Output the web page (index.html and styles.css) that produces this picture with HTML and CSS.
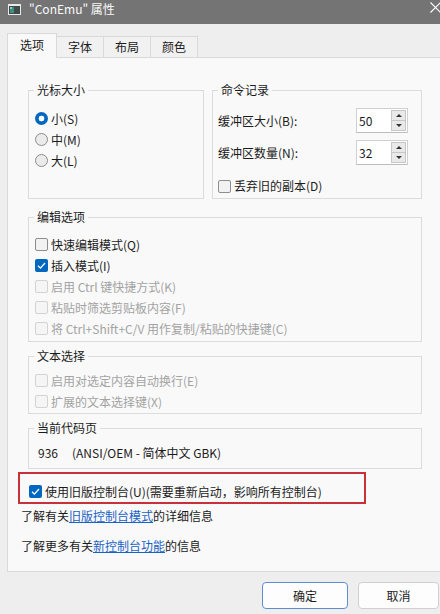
FILE: index.html
```html
<!DOCTYPE html>
<html lang="zh-CN">
<head>
<meta charset="utf-8">
<title>"ConEmu" 属性</title>
<link rel="stylesheet" href="styles.css">
</head>
<body>
<div class="window">
  <div class="titlebar">
    <svg class="app-icon" width="13" height="11" viewBox="0 0 13 11">
      <rect x="0" y="0" width="13" height="11" fill="#e9e9e9"/>
      <rect x="1" y="2" width="11" height="8" fill="#3f4a4a"/>
      <rect x="2" y="3" width="4" height="6" fill="#3f8f7f"/>
      <rect x="2" y="3" width="2" height="2" fill="#8fd0c0"/>
    </svg>
    <span class="title">"ConEmu" 属性</span>
    <svg class="close" width="11" height="11" viewBox="0 0 11 11">
      <path d="M0.5 0.5 L10.5 10.5 M10.5 0.5 L0.5 10.5" stroke="#ffffff" stroke-width="1.1" fill="none"/>
    </svg>
  </div>

  <div class="tabs">
    <div class="tab active">选项</div>
    <div class="tab">字体</div>
    <div class="tab">布局</div>
    <div class="tab">颜色</div>
    <div class="tab-fill"></div>
  </div>

  <div class="panel">
    <div class="groups">
      <div class="row-top">
        <fieldset class="group g-cursor">
          <legend>光标大小</legend>
          <div class="opts cursor-opts">
            <div class="opt"><span class="rd on"></span>小(S)</div>
            <div class="opt"><span class="rd"></span>中(M)</div>
            <div class="opt"><span class="rd"></span>大(L)</div>
          </div>
        </fieldset>
        <fieldset class="group g-history">
          <legend>命令记录</legend>
          <div class="history">
            <div class="field-row">
              <span>缓冲区大小(B):</span>
              <div class="spin">
                <span class="spin-val">50</span>
                <span class="spin-btns"><span class="sb up"></span><span class="sb down"></span></span>
              </div>
            </div>
            <div class="field-row second">
              <span>缓冲区数量(N):</span>
              <div class="spin">
                <span class="spin-val">32</span>
                <span class="spin-btns"><span class="sb up"></span><span class="sb down"></span></span>
              </div>
            </div>
            <div class="opt discard"><span class="cb"></span>丢弃旧的副本(D)</div>
          </div>
        </fieldset>
      </div>

      <fieldset class="group g-edit">
        <legend>编辑选项</legend>
        <div class="opts edit-opts">
          <div class="opt"><span class="cb"></span>快速编辑模式(Q)</div>
          <div class="opt"><svg class="cbx" width="13" height="13" viewBox="0 0 13 13"><rect width="13" height="13" rx="2" fill="#0067c0"/><path d="M3 6.8 L5.4 9.1 L10 4" stroke="#fff" stroke-width="1.3" fill="none"/></svg>插入模式(I)</div>
          <div class="opt dis"><span class="cb"></span>启用 Ctrl 键快捷方式(K)</div>
          <div class="opt dis"><span class="cb"></span>粘贴时筛选剪贴板内容(F)</div>
          <div class="opt dis"><span class="cb"></span>将 Ctrl+Shift+C/V 用作复制/粘贴的快捷键(C)</div>
        </div>
      </fieldset>

      <fieldset class="group g-select">
        <legend>文本选择</legend>
        <div class="opts select-opts">
          <div class="opt dis"><span class="cb"></span>启用对选定内容自动换行(E)</div>
          <div class="opt dis"><span class="cb"></span>扩展的文本选择键(X)</div>
        </div>
      </fieldset>

      <fieldset class="group g-codepage">
        <legend>当前代码页</legend>
        <div class="codepage"><span class="cp-num">936</span>(ANSI/OEM - 简体中文 GBK)</div>
      </fieldset>
    </div>

    <div class="legacy">
      <div class="opt"><svg class="cbx" width="13" height="13" viewBox="0 0 13 13"><rect width="13" height="13" rx="2" fill="#0067c0"/><path d="M3 6.8 L5.4 9.1 L10 4" stroke="#fff" stroke-width="1.3" fill="none"/></svg>使用旧版控制台(U)(需要重新启动，影响所有控制台)</div>
    </div>

    <div class="info first">了解有关<a href="#">旧版控制台模式</a>的详细信息</div>
    <div class="info second">了解更多有关<a href="#">新控制台功能</a>的信息</div>
  </div>

  <div class="footer">
    <button class="btn default">确定</button>
    <button class="btn cancel">取消</button>
  </div>
</div>
</body>
</html>
```

FILE: styles.css
```css
* { box-sizing: border-box; }
html, body { margin: 0; padding: 0; }
body {
  background: #eeeeee;
  font-family: "Noto Sans CJK SC", "Microsoft YaHei", sans-serif;
  font-size: 12px;
  color: #1b1b1b;
}
.window {
  width: 440px;
  height: 614px;
  overflow: hidden;
  background: #eeeeee;
}

/* title bar */
.titlebar {
  height: 24px;
  background: #747474;
  display: flex;
  align-items: center;
  padding: 0 0 6px 8px;
  color: #fafafa;
}
.app-icon { flex: none; }
.title { margin-left: 8px; line-height: 16px; }
.close { margin-left: auto; margin-right: -1px; align-self: flex-start; margin-top: 2px; flex: none; }

/* tabs */
.tabs {
  height: 34px;
  display: flex;
  align-items: flex-end;
  padding-left: 7px;
}
.tab {
  height: 22px;
  border: 1px solid #d9d9d9;
  border-left: none;
  background: #f1f1f1;
  padding: 0 11px;
  display: flex;
  align-items: center;
  line-height: 16px;
}
.tab.active {
  height: 25px;
  border-left: 1px solid #d9d9d9;
  border-bottom: none;
  background: #f9f9f9;
  padding: 0 12px 3px;
}
.tab-fill { flex: 1; border-bottom: 1px solid #d9d9d9; }

/* panel */
.panel {
  margin-left: 7px;
  width: 460px;
  height: 514px;
  border-left: 1px solid #d9d9d9;
  border-bottom: 1px solid #d9d9d9;
  background: #f9f9f9;
  padding: 24px 0 0 10px;
}
.groups { margin-left: 10px; width: 394px; }
.row-top { display: flex; gap: 8px; }

.group {
  margin: 0;
  padding: 0;
  border: 1px solid #dcdcdc;
  min-width: 0;
}
.group legend {
  padding: 0 3px;
  margin-left: 5px;
  line-height: 16px;
}
.g-cursor { width: 176px; }
.g-history { width: 210px; }

.opt {
  height: 21px;
  display: flex;
  align-items: center;
  gap: 3px;
  line-height: 16px;
  white-space: nowrap;
}
.opt.dis { color: #a3a3a3; }

.rd {
  width: 13px;
  height: 13px;
  border-radius: 50%;
  border: 1px solid #8c8c8c;
  background: #ebebeb;
  flex: none;
}
.rd.on {
  border: none;
  background: radial-gradient(circle at center, #ffffff 0 2.6px, #0067c0 3.2px);
}
.cb {
  width: 13px;
  height: 13px;
  border: 1px solid #8d8d8d;
  border-radius: 2px;
  background: #f2f2f2;
  flex: none;
}
.opt.dis .cb { border-color: #d3d3d3; background: #f5f5f5; }
.cbx { flex: none; }

.cursor-opts { padding: 10px 0 0 6px; }

.history { padding: 10px 13px 2px 5px; }
.field-row {
  height: 25px;
  display: flex;
  justify-content: space-between;
  align-items: center;
  line-height: 16px;
}
.field-row.second { margin-top: 7px; }
.discard { margin-top: 11px; height: 20px; }

.spin {
  width: 52px;
  height: 25px;
  border: 1px solid #d0d0d0;
  border-bottom-color: #bdbdbd;
  background: #ffffff;
  display: flex;
}
.spin-val { flex: 1; padding-left: 2px; line-height: 23px; }
.spin-btns {
  width: 15px;
  margin: 1px 1px 1px 0;
  display: flex;
  flex-direction: column;
}
.sb {
  flex: 1;
  border: 1px solid #c6c6c6;
  background: #e9e9e9;
  display: flex;
  align-items: center;
  justify-content: center;
}
.sb + .sb { border-top: none; }
.sb::after {
  content: "";
  width: 0;
  height: 0;
  border-left: 3px solid transparent;
  border-right: 3px solid transparent;
}
.sb.up::after { border-bottom: 3px solid #333; }
.sb.down::after { border-top: 3px solid #333; }

.g-edit { margin-top: 10px; }
.edit-opts { padding: 9px 0 2px 6px; }

.g-select { margin-top: 6px; }
.select-opts { padding: 6px 0 1px 6px; }

.g-codepage { margin-top: 6px; }
.codepage {
  padding: 6px 0 5px 9px;
  height: 32px;
  line-height: 21px;
}
.cp-num { margin-right: 14px; }

/* red annotation box */
.legacy {
  margin-top: 3px;
  width: 348px;
  height: 32px;
  border: 2px solid #c8303a;
  padding: 7px 0 0 9px;
}

.info {
  margin-left: 3px;
  height: 21px;
  line-height: 21px;
}
.info.first { margin-top: 1px; }
.info.second { margin-top: 9px; }
.info a { color: #1a62c6; text-decoration: underline; }

/* footer */
.footer {
  height: 42px;
  display: flex;
  justify-content: flex-end;
  align-items: flex-start;
  gap: 10px;
  padding: 10px 1px 0 0;
}
.btn {
  height: 27px;
  border: 1px solid #d0d0d0;
  border-radius: 4px;
  background: #fdfdfd;
  font-family: inherit;
  font-size: 12px;
  color: #1b1b1b;
  padding: 0;
}
.btn.default { width: 86px; border-color: #5b8fd3; }
.btn.cancel { width: 81px; }
```
